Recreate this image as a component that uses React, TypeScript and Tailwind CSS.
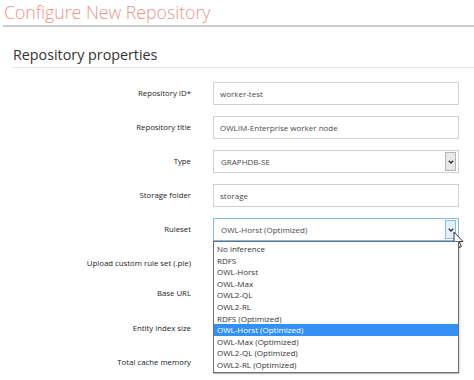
import type { ReactNode } from "react";

const rulesets = [
  "No inference",
  "RDFS",
  "OWL-Horst",
  "OWL-Max",
  "OWL2-QL",
  "OWL2-RL",
  "RDFS (Optimized)",
  "OWL-Horst (Optimized)",
  "OWL-Max (Optimized)",
  "OWL2-QL (Optimized)",
  "OWL2-RL (Optimized)",
];

const Row = ({ label, className = "", children }: { label: string; className?: string; children?: ReactNode }) => (
  <div className={`flex items-center h-[23px] ${className}`}>
    <div className="w-[192px] text-right text-[7.8px] text-[#222] pr-[1px]">{label}</div>
    <div className="ml-[21px] w-[246px] h-full relative">{children}</div>
  </div>
);

const TextInput = ({ value }: { value?: string }) => (
  <div className="w-full h-full border border-[#d0d0d0] bg-white flex items-center pl-[6px] text-[8px] text-[#4a4a4a]">
    {value}
  </div>
);

const Chevron = () => (
  <svg width="6" height="4" viewBox="0 0 6 4">
    <path d="M0.8 0.8 L3 3 L5.2 0.8" stroke="#333" strokeWidth="1.4" fill="none" />
  </svg>
);

const Select = ({ value, focused }: { value: string; focused?: boolean }) => (
  <div
    className={`w-full h-full border bg-white flex items-center pl-[7px] pr-[2px] text-[8px] text-[#4a4a4a] ${
      focused ? "border-[#86b8e8]" : "border-[#d0d0d0]"
    }`}
  >
    <span className="flex-1">{value}</span>
    <div
      className={`w-[11px] h-[19px] border flex items-center justify-center ${
        focused ? "bg-[#e3effb] border-[#8fbbe6]" : "bg-[#e8e8e8] border-[#b5b5b5]"
      }`}
    >
      <Chevron />
    </div>
  </div>
);

const Cursor = () => (
  <svg className="absolute left-[240px] top-[13px]" width="12" height="18" viewBox="0 0 12 18">
    <path d="M1 1 L1 14 L4 11 L6.5 16.5 L8.5 15.5 L6 10.5 L10 10.5 Z" fill="#fff" stroke="#333" strokeWidth="1" />
  </svg>
);

export default function App() {
  return (
    <div className="w-[474px] h-[380px] overflow-hidden bg-white" style={{ fontFamily: '"Open Sans", "Noto Sans", sans-serif' }}>
      {/* Page title */}
      <h1 className="pl-[4px] pt-[1px] h-[25px] text-[17.7px] font-light leading-[22px] text-[#e8958a]">
        Configure New Repository
      </h1>
      <div className="ml-[3px] h-[2px] bg-[#cbcbcb]" />

      {/* Section */}
      <div className="ml-[12px] mt-[18px] border-b border-[#e6e6e6] h-[23px]">
        <h2 className="pl-[1px] text-[14.3px] leading-[20px] text-[#333]">Repository properties</h2>
      </div>

      {/* Form */}
      <div className="mt-[14px] flex flex-col">
        <Row label="Repository ID*">
          <TextInput value="worker-test" />
        </Row>
        <Row label="Repository title" className="mt-[11px]">
          <TextInput value="OWLIM-Enterprise worker node" />
        </Row>
        <Row label="Type" className="mt-[11px]">
          <Select value="GRAPHDB-SE" />
        </Row>
        <Row label="Storage folder" className="mt-[11px]">
          <TextInput value="storage" />
        </Row>
        <Row label="Ruleset" className="mt-[11px] relative z-10">
          <Select value="OWL-Horst (Optimized)" focused />
          <Cursor />
          {/* Open dropdown list */}
          <div className="absolute top-full left-0 w-full border border-[#707070] bg-white py-[1px] shadow-[1px_1px_2px_rgba(0,0,0,0.15)]">
            {rulesets.map((r) => (
              <div
                key={r}
                className={`h-[11.6px] leading-[11.6px] pl-[3px] text-[8px] ${
                  r === "OWL-Horst (Optimized)" ? "bg-[#3391f5] text-white" : "text-[#333]"
                }`}
              >
                {r}
              </div>
            ))}
          </div>
        </Row>
        <Row label="Upload custom rule set (.pie)" className="mt-[11px]" />
        <Row label="Base URL" className="mt-[7px]">
          <TextInput />
        </Row>
        <Row label="Entity index size" className="mt-[12px]">
          <TextInput />
        </Row>
        <Row label="Total cache memory" className="mt-[11px]">
          <TextInput />
        </Row>
      </div>
    </div>
  );
}
